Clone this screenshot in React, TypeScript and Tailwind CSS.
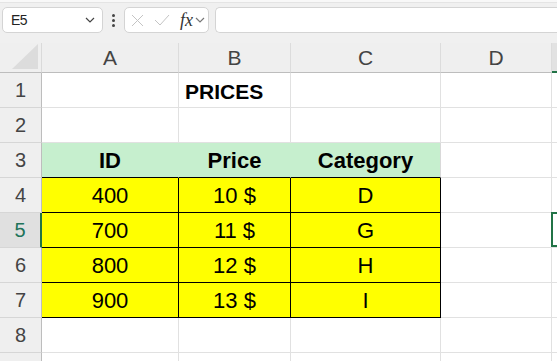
import React from "react";

const FONT = { fontFamily: '"Liberation Sans", Arial, sans-serif' };

const rows = [1, 2, 3, 4, 5, 6, 7, 8, 9];
const colLetters = ["A", "B", "C", "D"];

const data: Record<number, string[]> = {
  4: ["400", "10 $", "D"],
  5: ["700", "11 $", "G"],
  6: ["800", "12 $", "H"],
  7: ["900", "13 $", "I"],
};

function Chevron({ className }: { className?: string }) {
  return (
    <svg width="10" height="6" viewBox="0 0 10 6" className={className}>
      <path d="M1 1 L5 5 L9 1" fill="none" stroke="currentColor" strokeWidth="1.2" />
    </svg>
  );
}

export default function App() {
  return (
    <div className="w-[557px] h-[361px] overflow-hidden bg-white text-black" style={FONT}>
      {/* toolbar */}
      <div className="h-[43px] bg-[#f0f0f0] flex flex-col">
        <div className="h-[3px] bg-[#f8f8f8] border-b border-[#e4e4e4]" />
        <div className="flex items-center pt-[4px] pl-[2px] h-[30px]">
          <div className="w-[101px] h-[26px] bg-white rounded-[5px] border border-[#d4d4d4] flex items-center justify-between pl-[8px] pr-[7px]">
            <span className="text-[14px] text-[#222] leading-none tracking-[-0.5px]">E5</span>
            <Chevron className="text-[#444]" />
          </div>
          <div className="w-[21px] flex flex-col items-center gap-[2px]">
            <span className="w-[3px] h-[3px] bg-[#444] rounded-full" />
            <span className="w-[3px] h-[3px] bg-[#444] rounded-full" />
            <span className="w-[3px] h-[3px] bg-[#444] rounded-full" />
          </div>
          <div className="w-[85px] h-[26px] bg-white rounded-[5px] border border-[#d4d4d4] flex items-center pl-[6px]">
            <svg width="13" height="13" viewBox="0 0 13 13" className="text-[#c4c4c4]">
              <path d="M1 1 L12 12 M12 1 L1 12" stroke="currentColor" strokeWidth="1" fill="none" />
            </svg>
            <svg width="16" height="12" viewBox="0 0 16 12" className="ml-[10px] text-[#c4c4c4]">
              <path d="M1 6 L6 11 L15 1" stroke="currentColor" strokeWidth="1" fill="none" />
            </svg>
            <span
              className="ml-[10px] text-[18px] italic text-[#333] leading-none"
              style={{ fontFamily: '"Liberation Serif", "Times New Roman", serif' }}
            >
              fx
            </span>
            <Chevron className="ml-[2px] text-[#777]" />
          </div>
          <div className="ml-[6px] flex-1 h-[26px] bg-white rounded-l-[5px] border border-r-0 border-[#d4d4d4]" />
        </div>
      </div>

      {/* grid */}
      <div className="grid grid-cols-[42px_137px_112px_150px_111px_1fr]">
        {/* header row */}
        <div className="h-[30px] relative bg-[#efefef] border-r border-[#dadada] border-b border-b-[#bdbdbd]">
          <svg width="26" height="25" viewBox="0 0 26 25" className="absolute right-[3px] bottom-[3px]">
            <polygon points="26,0 26,25 0,25" fill="#dcdcdc" />
          </svg>
        </div>
        {colLetters.map((c) => (
          <div
            key={c}
            className="h-[30px] bg-[#efefef] border-r border-[#dcdcdc] border-b border-b-[#bdbdbd] flex items-center justify-center text-[21px] text-[#444]"
          >
            {c}
          </div>
        ))}
        <div className="h-[30px] bg-[#e2e2e2] border-b-2 border-[#217346]" />

        {rows.map((r) => {
          const sel = r === 5;
          const cells: React.ReactNode[] = [];
          cells.push(
            <div
              key={`h${r}`}
              className={
                sel
                  ? "h-[35px] bg-[#e0e0e0] border-r-2 border-r-[#217346] border-b border-b-[#d6d6d6] flex items-center justify-center text-[20px] text-[#21735a]"
                  : "h-[35px] bg-[#efefef] border-r border-r-[#bdbdbd] border-b border-b-[#d6d6d6] flex items-center justify-center text-[20px] text-[#444]"
              }
            >
              {r < 9 ? r : null}
            </div>
          );
          for (let c = 0; c < 3; c++) {
            let cls = "h-[35px] flex items-center justify-center ";
            let content: React.ReactNode = null;
            if (r === 3) {
              cls += "bg-[#c6efce] border-b border-b-black " + (c === 2 ? "border-r border-r-[#d9d9d9] " : "border-r border-r-[#c6efce] ");
              content = <span className="text-[22px] font-bold">{["ID", "Price", "Category"][c]}</span>;
            } else if (data[r]) {
              cls += "bg-[#ffff00] border-r border-b border-black ";
              content = <span className="text-[22px]">{data[r][c]}</span>;
            } else {
              cls += "border-r border-b border-[#e1e1e1] ";
              if (r === 1 && c === 1) {
                cls = "h-[35px] flex items-center justify-start pl-[6px] pt-[3px] border-r border-b border-[#e1e1e1] ";
                content = <span className="text-[21px] font-bold">PRICES</span>;
              }
            }
            cells.push(
              <div key={`c${r}-${c}`} className={cls}>
                {content}
              </div>
            );
          }
          cells.push(<div key={`d${r}`} className="h-[35px] border-r border-b border-[#e1e1e1]" />);
          cells.push(
            <div key={`e${r}`} className="h-[35px] relative border-b border-[#e1e1e1]">
              {sel && <div className="absolute -top-px -left-px w-[30px] bottom-0 border-2 border-[#217346]" />}
            </div>
          );
          return cells;
        })}
      </div>
    </div>
  );
}
